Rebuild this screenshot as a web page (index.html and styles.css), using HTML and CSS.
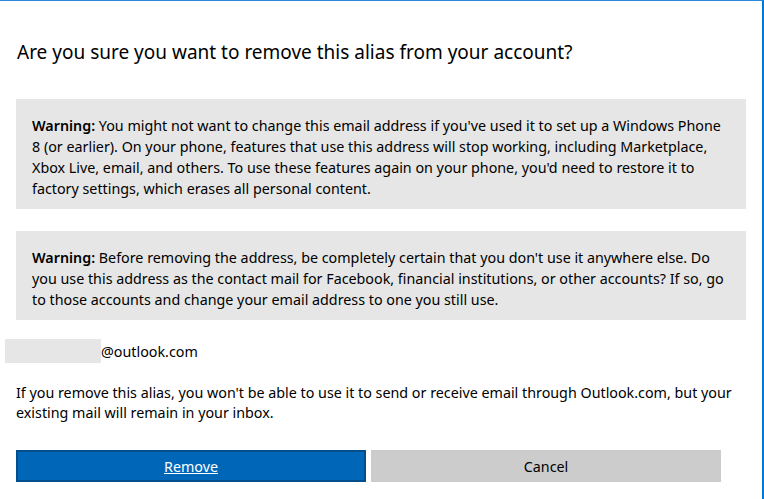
FILE: index.html
```html
<!DOCTYPE html>
<html lang="en">
<head>
    <meta charset="UTF-8">
    <meta name="viewport" content="width=device-width, initial-scale=1.0">
    <title>Remove alias</title>
    <link rel="stylesheet" href="styles.css">
</head>
<body>
    <div class="window">
        <div class="content">
            <h1 class="title">Are you sure you want to remove this alias from your account?</h1>

            <div class="warning">
                <b>Warning:</b> You might not want to change this email address if you've used it to set up a Windows Phone<br>
                8 (or earlier). On your phone, features that use this address will stop working, including Marketplace,<br>
                Xbox Live, email, and others. To use these features again on your phone, you'd need to restore it to<br>
                factory settings, which erases all personal content.
            </div>

            <div class="warning">
                <b>Warning:</b> Before removing the address, be completely certain that you don't use it anywhere else. Do<br>
                you use this address as the contact mail for Facebook, financial institutions, or other accounts? If so, go<br>
                to those accounts and change your email address to one you still use.
            </div>

            <div class="alias-row">
                <span class="redacted"></span><span class="domain">@outlook.com</span>
            </div>

            <p class="note">
                If you remove this alias, you won't be able to use it to send or receive email through Outlook.com, but your<br>
                existing mail will remain in your inbox.
            </p>

            <div class="button-container">
                <button class="btn btn-primary"><span>Remove</span></button>
                <button class="btn btn-secondary">Cancel</button>
            </div>
        </div>
    </div>
</body>
</html>
```

FILE: styles.css
```css
html, body {
    margin: 0;
    padding: 0;
    background: #fff;
}
body {
    font-family: "Noto Sans", "Open Sans", sans-serif;
    color: #000;
}
.window {
    height: 499px;
    box-sizing: border-box;
    border-top: 1px solid #2b88d8;
    border-right: 2px solid #0078d7;
}
.content {
    width: 730px;
    padding-left: 16px;
}
.title {
    font-size: 19px;
    font-weight: normal;
    line-height: 28px;
    margin: 37px 0 33px 1px;
}
.warning {
    background: #e6e6e6;
    font-size: 14.3px;
    line-height: 21px;
    padding: 16px 16px 10px 16px;
    margin-bottom: 22px;
    white-space: nowrap;
}
.warning b {
    font-weight: 600;
}
.alias-row {
    display: flex;
    align-items: center;
    height: 24px;
    margin-left: -11px;
    margin-top: -3px;
    font-size: 14.3px;
}
.redacted {
    display: inline-block;
    width: 96px;
    height: 24px;
    background: #e6e6e6;
}
.note {
    font-size: 14.3px;
    line-height: 20px;
    margin: 20px 0 27px 0;
    white-space: nowrap;
}
.button-container {
    display: flex;
    gap: 5px;
}
.btn {
    flex: 0 0 350px;
    box-sizing: border-box;
    height: 32px;
    font-family: inherit;
    font-size: 14.3px;
    border: none;
    padding: 0;
    cursor: pointer;
}
.btn-primary {
    background: #0067b8;
    border: 2px solid #004e8c;
    color: #fff;
}
.btn-primary span {
    text-decoration: underline;
}
.btn-secondary {
    background: #cccccc;
    color: #000;
}
```
